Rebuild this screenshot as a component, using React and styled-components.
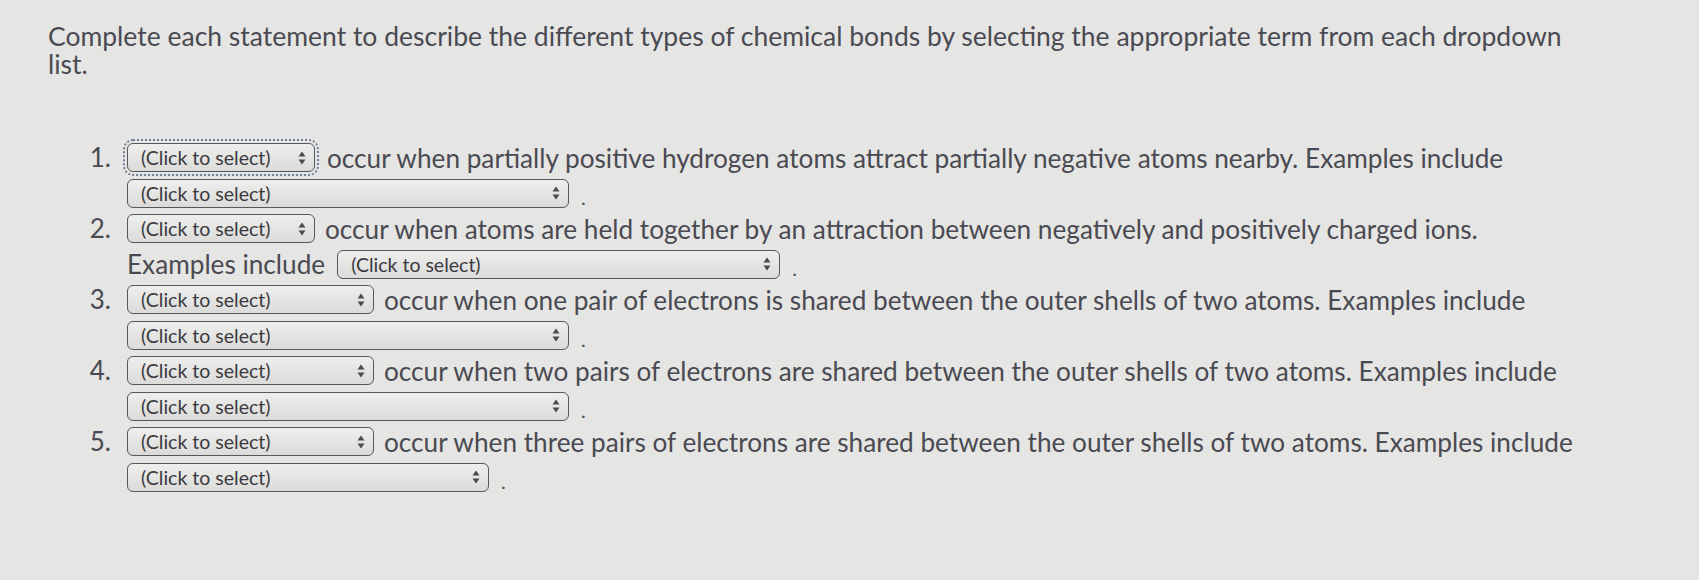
import React from "react";
import styled, { createGlobalStyle } from "styled-components";

const GlobalStyle = createGlobalStyle`
  body {
    margin: 0;
    background: #e5e5e3;
    font-family: Lato, "Open Sans", sans-serif;
    color: #4a4a52;
  }
`;

const Page = styled.div`
  padding: 23px 0 0 48px;
  height: 580px;
  box-sizing: border-box;
`;

const Prompt = styled.p`
  margin: 0;
  width: 1530px;
  font-size: 26.5px;
  line-height: 27.5px;
`;

const List = styled.ol`
  list-style: none;
  margin: 62px 0 0;
  padding: 0;
`;

const Item = styled.li`
  display: flex;
`;

const Num = styled.span`
  width: 79px;
  padding-right: 16px;
  box-sizing: border-box;
  text-align: right;
  font-size: 26px;
  line-height: 35.5px;
`;

const Lines = styled.div`
  display: flex;
  flex-direction: column;
`;

const Line = styled.div`
  display: flex;
  align-items: center;
  height: 35.5px;
  white-space: nowrap;
  font-size: 26.2px;
`;

const Text = styled.span`
  margin-left: ${(p) => p.$gap || 10}px;
`;

const Lead = styled.span`
  margin-right: 12px;
`;

const Dot = styled.span`
  margin-left: 12px;
  font-size: 20px;
  transform: translateY(4px);
`;

const Select = styled.span`
  display: inline-flex;
  align-items: center;
  justify-content: space-between;
  width: ${(p) => p.$w}px;
  height: 29px;
  box-sizing: border-box;
  padding: 0 8px 0 13px;
  border: 1.5px solid #56565c;
  border-radius: 6px;
  background: linear-gradient(#eeeeec, #dbdbd9);
  font-size: 19.5px;
  color: #3a3a40;
  outline: ${(p) => (p.$focus ? "2px dotted #6f7f95" : "none")};
  outline-offset: 2px;
`;

const Arrows = () => (
  <svg width="8" height="14" viewBox="0 0 8 14">
    <path d="M4 0.5 L7.5 5.5 H0.5 Z" fill="#4a4a50" />
    <path d="M4 13.5 L7.5 8.5 H0.5 Z" fill="#4a4a50" />
  </svg>
);

const Dropdown = ({ w, focus }) => (
  <Select $w={w} $focus={focus}>
    (Click to select)
    <Arrows />
  </Select>
);

const items = [
  {
    first: 188,
    text: "occur when partially positive hydrogen atoms attract partially negative atoms nearby. Examples include",
    second: 442,
  },
  {
    first: 188,
    text: "occur when atoms are held together by an attraction between negatively and positively charged ions.",
    lead: "Examples include",
    second: 443,
  },
  {
    first: 247,
    text: "occur when one pair of electrons is shared between the outer shells of two atoms. Examples include",
    second: 442,
  },
  {
    first: 247,
    text: "occur when two pairs of electrons are shared between the outer shells of two atoms. Examples include",
    second: 442,
  },
  {
    first: 247,
    text: "occur when three pairs of electrons are shared between the outer shells of two atoms. Examples include",
    second: 362,
  },
];

export default function App() {
  return (
    <Page>
      <GlobalStyle />
      <Prompt>
        Complete each statement to describe the different types of chemical
        bonds by selecting the appropriate term from each dropdown list.
      </Prompt>
      <List>
        {items.map((it, i) => (
          <Item key={i}>
            <Num>{i + 1}.</Num>
            <Lines>
              <Line>
                <Dropdown w={it.first} focus={i === 0} />
                <Text $gap={i === 0 ? 12 : 10}>{it.text}</Text>
              </Line>
              <Line>
                {it.lead && <Lead>{it.lead}</Lead>}
                <Dropdown w={it.second} />
                <Dot>.</Dot>
              </Line>
            </Lines>
          </Item>
        ))}
      </List>
    </Page>
  );
}
